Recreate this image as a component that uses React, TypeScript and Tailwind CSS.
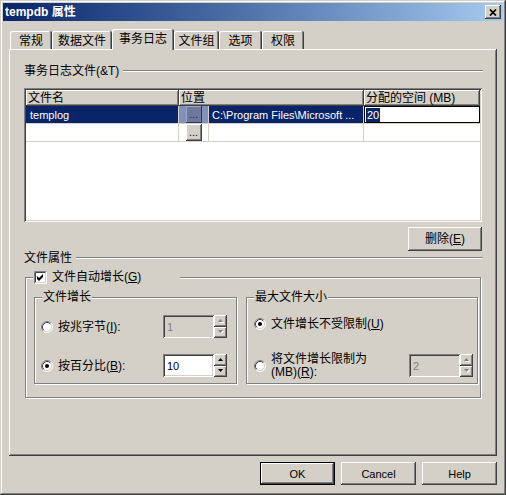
import type { ReactNode } from "react";

const raised =
  "bg-[#d4d0c8] shadow-[inset_-1px_-1px_#404040,inset_1px_1px_#ffffff,inset_-2px_-2px_#808080,inset_2px_2px_#d4d0c8]";
const sunken =
  "shadow-[inset_1px_1px_#808080,inset_-1px_-1px_#ffffff,inset_2px_2px_#404040,inset_-2px_-2px_#d4d0c8]";
const etched = "border border-[#808080] shadow-[inset_1px_1px_#ffffff,1px_1px_#ffffff]";
const etchedLine = "h-[2px] border-t border-b border-t-[#808080] border-b-white";
const headerCell =
  "flex h-full items-center bg-[#d4d0c8] pl-[2px] shadow-[inset_-1px_-1px_#404040,inset_1px_1px_#ffffff,inset_-2px_-2px_#808080]";

const tabs = [
  { label: "常规", width: "w-[42px]" },
  { label: "数据文件", width: "w-[60px]" },
  { label: "事务日志", width: "w-[62px]", active: true },
  { label: "文件组", width: "w-[45px]" },
  { label: "选项", width: "w-[43px]" },
  { label: "权限", width: "w-[42px]" },
];

function Key({ children }: { children: ReactNode }) {
  return <span className="underline underline-offset-[1px]">{children}</span>;
}

function Radio({ checked }: { checked?: boolean }) {
  return (
    <svg width="12" height="12" viewBox="0 0 12 12" className="shrink-0">
      <circle cx="6" cy="6" r="5" fill="#ffffff" />
      <path d="M2.11 9.89A5.5 5.5 0 0 1 9.89 2.11" fill="none" stroke="#808080" />
      <path d="M9.89 2.11A5.5 5.5 0 0 1 2.11 9.89" fill="none" stroke="#ffffff" />
      <path d="M2.82 9.18A4.5 4.5 0 0 1 9.18 2.82" fill="none" stroke="#404040" />
      <path d="M9.18 2.82A4.5 4.5 0 0 1 2.82 9.18" fill="none" stroke="#d4d0c8" />
      {checked ? <circle cx="6" cy="6" r="2" fill="#000000" /> : null}
    </svg>
  );
}

function CheckBox() {
  return (
    <svg width="13" height="13" viewBox="0 0 13 13" className="shrink-0">
      <rect x="0" y="0" width="13" height="13" fill="#ffffff" />
      <path d="M0.5 12.5V0.5H12.5" fill="none" stroke="#808080" />
      <path d="M1.5 11.5V1.5H11.5" fill="none" stroke="#404040" />
      <path d="M1.5 11.5H11.5V1.5" fill="none" stroke="#d4d0c8" />
      <polygon points="3,5 5,7 9,3 9,6 5,10 3,8" fill="#000000" />
    </svg>
  );
}

function Arrow({ down, disabled }: { down?: boolean; disabled?: boolean }) {
  const d = down ? "M0 0H5L2.5 3Z" : "M2.5 0L5 3H0Z";
  return (
    <svg width="6" height="4" viewBox="0 0 6 4">
      {disabled ? <path d={d} transform="translate(1 1)" fill="#ffffff" /> : null}
      <path d={d} fill={disabled ? "#808080" : "#000000"} />
    </svg>
  );
}

function NumberField({ value, disabled }: { value: string; disabled?: boolean }) {
  return (
    <div className="flex h-[23px] w-[64px] shrink-0">
      <div
        className={`flex h-full w-[51px] items-center pl-[4px] text-[11px] ${sunken} ${
          disabled ? "bg-[#d4d0c8] text-[#808080]" : "bg-white text-black"
        }`}
      >
        {value}
      </div>
      <div className="flex h-full w-[13px] flex-col">
        <div className={`flex flex-1 items-center justify-center ${raised}`}>
          <Arrow disabled={disabled} />
        </div>
        <div className={`flex flex-1 items-center justify-center ${raised}`}>
          <Arrow down disabled={disabled} />
        </div>
      </div>
    </div>
  );
}

function Group({ label, className, children }: { label: string; className: string; children: ReactNode }) {
  return (
    <div className={`relative flex h-[87px] flex-col ${etched} ${className}`}>
      <span className="absolute left-[7px] top-[-8px] h-[14px] bg-[#d4d0c8] px-[1px] leading-[14px]">{label}</span>
      {children}
    </div>
  );
}

function SectionTitle({ children, className }: { children: ReactNode; className: string }) {
  return (
    <div className={`flex h-[14px] items-center ${className}`}>
      <span className="leading-[14px]">{children}</span>
      <div className={`ml-[4px] mr-[-1px] flex-1 ${etchedLine}`} />
    </div>
  );
}

function EllipsisButton({ selected }: { selected?: boolean }) {
  return (
    <div
      className={`flex h-[17px] w-[16px] items-end justify-center pb-[3px] text-[11px] leading-none ${
        selected
          ? "bg-[#6d789c] text-[#0a246a] shadow-[inset_-1px_-1px_#2a3a6e,inset_1px_1px_#9ea8c8]"
          : raised
      }`}
    >
      ...
    </div>
  );
}

export default function App() {
  return (
    <div className="flex h-[495px] w-[506px] flex-col bg-[#d4d0c8] p-[3px] text-[12px] leading-[14px] text-black shadow-[inset_-1px_-1px_#404040,inset_1px_1px_#d4d0c8,inset_-2px_-2px_#808080,inset_2px_2px_#ffffff] font-[family-name:'Liberation_Sans','Noto_Sans_CJK_SC',sans-serif]">
      {/* title bar */}
      <div className="flex h-[18px] shrink-0 items-center bg-linear-to-r from-[#0a246a] to-[#a6caf0] px-[2px]">
        <span className="text-[12px] font-bold text-white">tempdb 属性</span>
        <div className={`ml-auto flex h-[14px] w-[16px] items-center justify-center ${raised}`}>
          <svg width="8" height="7" viewBox="0 0 8 7">
            <path d="M1 0.5L7 6.5M7 0.5L1 6.5" stroke="#000000" strokeWidth="1.7" />
          </svg>
        </div>
      </div>

      {/* tabs */}
      <div className="ml-[7px] mt-[8px] flex h-[20px] shrink-0 items-end">
        {tabs.map((tab) =>
          tab.active ? (
            <div
              key={tab.label}
              className={`relative z-10 mb-[-1px] flex h-[21px] items-center justify-center rounded-t-[2px] bg-[#d4d0c8] pb-[1px] shadow-[inset_-1px_0_#404040,inset_1px_1px_#ffffff,inset_-2px_0_#808080] ${tab.width}`}
            >
              {tab.label}
            </div>
          ) : (
            <div
              key={tab.label}
              className={`flex h-[18px] items-center justify-center rounded-t-[2px] pt-[2px] shadow-[inset_-1px_0_#404040,inset_1px_1px_#ffffff,inset_-2px_0_#808080] ${tab.width}`}
            >
              {tab.label}
            </div>
          ),
        )}
      </div>

      {/* tab panel */}
      <div className="ml-[6px] flex h-[407px] w-[488px] shrink-0 flex-col px-[15px] shadow-[inset_-1px_-1px_#404040,inset_1px_1px_#ffffff,inset_-2px_-2px_#808080]">
        <SectionTitle className="mt-[15px]">事务日志文件(&amp;T)</SectionTitle>

        {/* file grid */}
        <div className={`mt-[10px] flex h-[134px] flex-col bg-white p-[2px] ${sunken}`}>
          <div className="flex h-[16px] shrink-0">
            <div className={`w-[153px] ${headerCell}`}>文件名</div>
            <div className={`w-[185px] ${headerCell}`}>位置</div>
            <div className={`flex-1 ${headerCell}`}>分配的空间 (MB)</div>
          </div>
          <div className="flex h-[18px] shrink-0 border-b border-[#d4d0c8]">
            <div className="flex w-[153px] items-center border-r border-[#d4d0c8] bg-[#0a246a] pl-[4px] text-[11px] text-white">
              templog
            </div>
            <div className="flex w-[30px] items-center justify-center border-r border-[#d4d0c8] bg-[#8390b8]">
              <EllipsisButton selected />
            </div>
            <div className="flex w-[155px] items-center overflow-hidden whitespace-nowrap border-r border-[#d4d0c8] bg-[#0a246a] pl-[3px] text-[11px] text-white">
              {"C:\\Program Files\\Microsoft ..."}
            </div>
            <div className="flex flex-1 items-center border border-black bg-white pl-[1px] text-[11px]">
              <span className="bg-[#0a246a] px-[1px] leading-[14px] text-white">20</span>
            </div>
          </div>
          <div className="flex h-[18px] shrink-0 border-b border-[#d4d0c8]">
            <div className="w-[153px] border-r border-[#d4d0c8]" />
            <div className="flex w-[30px] items-center justify-center border-r border-[#d4d0c8]">
              <EllipsisButton />
            </div>
            <div className="w-[155px] border-r border-[#d4d0c8]" />
            <div className="flex-1" />
          </div>
        </div>

        <div className={`mt-[5px] flex h-[24px] w-[74px] items-center justify-center self-end ${raised}`}>
          删除(<Key>E</Key>)
        </div>

        <SectionTitle className="mt-[0px]">文件属性</SectionTitle>

        {/* file properties group */}
        <div className={`relative mx-[1px] mt-[12px] flex h-[121px] pl-[8px] pt-[19px] ${etched}`}>
          <div className="absolute left-[7px] top-[-8px] flex h-[14px] w-[147px] items-center gap-[5px] bg-[#d4d0c8] pl-[1px]">
            <CheckBox />
            <span>
              文件自动增长(<Key>G</Key>)
            </span>
          </div>

          <Group label="文件增长" className="w-[203px]">
            <div className="mt-[17px] flex h-[23px] items-center pl-[6px]">
              <Radio />
              <span className="ml-[5px] flex-1">
                按兆字节(<Key>I</Key>):
              </span>
              <div className="mr-[9px]">
                <NumberField value="1" disabled />
              </div>
            </div>
            <div className="mt-[16px] flex h-[23px] items-center pl-[6px]">
              <Radio checked />
              <span className="ml-[5px] flex-1">
                按百分比(<Key>B</Key>):
              </span>
              <div className="mr-[9px]">
                <NumberField value="10" />
              </div>
            </div>
          </Group>

          <Group label="最大文件大小" className="ml-[9px] w-[232px]">
            <div className="mt-[19px] flex h-[14px] items-center pl-[7px]">
              <Radio checked />
              <span className="ml-[5px]">
                文件增长不受限制(<Key>U</Key>)
              </span>
            </div>
            <div className="mt-[23px] flex h-[23px] items-center pl-[7px]">
              <Radio />
              <div className="ml-[5px] flex flex-1 flex-col">
                <span className="leading-[13px]">将文件增长限制为</span>
                <span className="leading-[13px]">
                  (MB)(<Key>R</Key>):
                </span>
              </div>
              <div className="mr-[4px]">
                <NumberField value="2" disabled />
              </div>
            </div>
          </Group>
        </div>
      </div>

      {/* dialog buttons */}
      <div className="mt-[6px] flex justify-end gap-[6px] pr-[6px] text-[11px]">
        <div className="h-[23px] w-[75px] border border-black">
          <div className={`flex h-full w-full items-center justify-center ${raised}`}>OK</div>
        </div>
        <div className={`flex h-[23px] w-[75px] items-center justify-center ${raised}`}>Cancel</div>
        <div className={`flex h-[23px] w-[75px] items-center justify-center ${raised}`}>Help</div>
      </div>
    </div>
  );
}
